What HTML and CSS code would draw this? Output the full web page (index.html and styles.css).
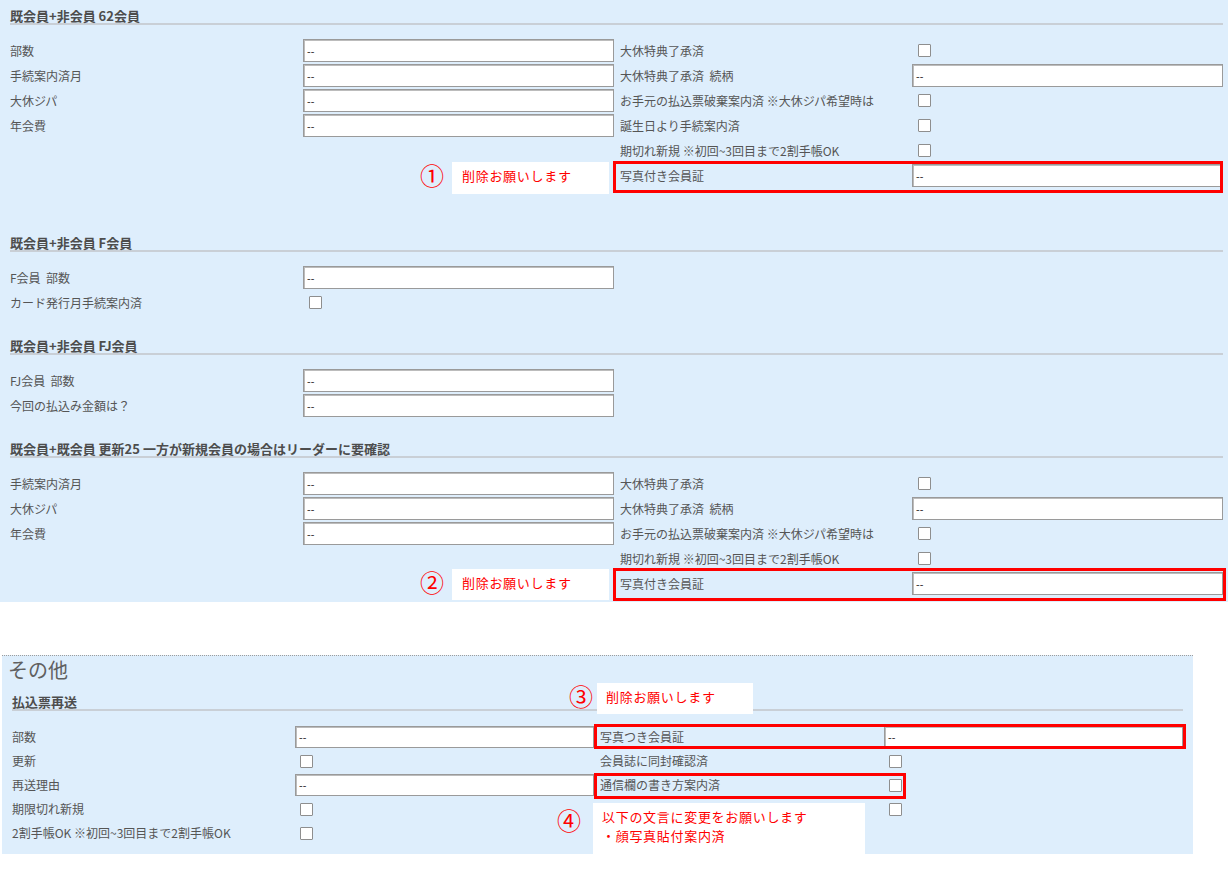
FILE: index.html
```html
<!DOCTYPE html>
<html lang="ja">
<head>
    <meta charset="UTF-8">
    <meta name="viewport" content="width=device-width, initial-scale=1.0">
    <title>会員手続き</title>
    <link rel="stylesheet" href="styles.css">
</head>
<body>
    <div class="top-panel">
        <!-- 62会員 -->
        <div class="section spaced">
            <div class="section-title">既会員+非会員 62会員</div>
            <div class="rows">
                <div class="row">
                    <div class="half left"><div class="label">部数</div><div class="field"><input type="text" class="text-input" value="--" readonly></div></div>
                    <div class="half right"><div class="label">大休特典了承済</div><div class="field"><input type="checkbox" class="check"></div></div>
                </div>
                <div class="row">
                    <div class="half left"><div class="label">手続案内済月</div><div class="field"><input type="text" class="text-input" value="--" readonly></div></div>
                    <div class="half right"><div class="label">大休特典了承済&nbsp;&nbsp;続柄</div><div class="field"><input type="text" class="text-input" value="--" readonly></div></div>
                </div>
                <div class="row">
                    <div class="half left"><div class="label">大休ジパ</div><div class="field"><input type="text" class="text-input" value="--" readonly></div></div>
                    <div class="half right"><div class="label">お手元の払込票破棄案内済 ※大休ジパ希望時は</div><div class="field"><input type="checkbox" class="check"></div></div>
                </div>
                <div class="row">
                    <div class="half left"><div class="label">年会費</div><div class="field"><input type="text" class="text-input" value="--" readonly></div></div>
                    <div class="half right"><div class="label">誕生日より手続案内済</div><div class="field"><input type="checkbox" class="check"></div></div>
                </div>
                <div class="row">
                    <div class="half left"><div class="label"></div><div class="field"></div></div>
                    <div class="half right"><div class="label">期切れ新規 ※初回~3回目まで2割手帳OK</div><div class="field"><input type="checkbox" class="check"></div></div>
                </div>
                <div class="row">
                    <div class="half left">
                        <div class="label"></div><div class="field"></div>
                        <div class="note-box note-1"><span class="note-num">①</span>削除お願いします</div>
                    </div>
                    <div class="half right">
                        <div class="label">写真付き会員証</div><div class="field"><input type="text" class="text-input" value="--" readonly></div>
                        <div class="mark mark-wide"></div>
                    </div>
                </div>
            </div>
        </div>

        <!-- F会員 -->
        <div class="section">
            <div class="section-title">既会員+非会員 F会員</div>
            <div class="rows">
                <div class="row">
                    <div class="half left"><div class="label">F会員&nbsp;&nbsp;部数</div><div class="field"><input type="text" class="text-input" value="--" readonly></div></div>
                </div>
                <div class="row">
                    <div class="half left"><div class="label">カード発行月手続案内済</div><div class="field"><input type="checkbox" class="check"></div></div>
                </div>
            </div>
        </div>

        <!-- FJ会員 -->
        <div class="section">
            <div class="section-title">既会員+非会員 FJ会員</div>
            <div class="rows">
                <div class="row">
                    <div class="half left"><div class="label">FJ会員&nbsp;&nbsp;部数</div><div class="field"><input type="text" class="text-input" value="--" readonly></div></div>
                </div>
                <div class="row">
                    <div class="half left"><div class="label">今回の払込み金額は？</div><div class="field"><input type="text" class="text-input" value="--" readonly></div></div>
                </div>
            </div>
        </div>

        <!-- 更新25 -->
        <div class="section">
            <div class="section-title">既会員+既会員 更新25 一方が新規会員の場合はリーダーに要確認</div>
            <div class="rows">
                <div class="row">
                    <div class="half left"><div class="label">手続案内済月</div><div class="field"><input type="text" class="text-input" value="--" readonly></div></div>
                    <div class="half right"><div class="label">大休特典了承済</div><div class="field"><input type="checkbox" class="check"></div></div>
                </div>
                <div class="row">
                    <div class="half left"><div class="label">大休ジパ</div><div class="field"><input type="text" class="text-input" value="--" readonly></div></div>
                    <div class="half right"><div class="label">大休特典了承済&nbsp;&nbsp;続柄</div><div class="field"><input type="text" class="text-input" value="--" readonly></div></div>
                </div>
                <div class="row">
                    <div class="half left"><div class="label">年会費</div><div class="field"><input type="text" class="text-input" value="--" readonly></div></div>
                    <div class="half right"><div class="label">お手元の払込票破棄案内済 ※大休ジパ希望時は</div><div class="field"><input type="checkbox" class="check"></div></div>
                </div>
                <div class="row">
                    <div class="half left"><div class="label"></div><div class="field"></div></div>
                    <div class="half right"><div class="label">期切れ新規 ※初回~3回目まで2割手帳OK</div><div class="field"><input type="checkbox" class="check"></div></div>
                </div>
                <div class="row">
                    <div class="half left">
                        <div class="label"></div><div class="field"></div>
                        <div class="note-box note-2"><span class="note-num">②</span>削除お願いします</div>
                    </div>
                    <div class="half right">
                        <div class="label">写真付き会員証</div><div class="field"><input type="text" class="text-input" value="--" readonly></div>
                        <div class="mark mark-wide mark-2"></div>
                    </div>
                </div>
            </div>
        </div>
    </div>

    <div class="bottom-panel">
        <div class="panel-title">その他</div>
        <div class="section">
            <div class="section-title">
                払込票再送
                <div class="note-box note-3"><span class="note-num">③</span>削除お願いします</div>
            </div>
            <div class="rows">
                <div class="row">
                    <div class="half left"><div class="label">部数</div><div class="field"><input type="text" class="text-input" value="--" readonly></div></div>
                    <div class="half right">
                        <div class="label">写真つき会員証</div><div class="field"><input type="text" class="text-input" value="--" readonly></div>
                        <div class="mark mark-3"></div>
                    </div>
                </div>
                <div class="row">
                    <div class="half left"><div class="label">更新</div><div class="field"><input type="checkbox" class="check"></div></div>
                    <div class="half right"><div class="label">会員誌に同封確認済</div><div class="field"><input type="checkbox" class="check"></div></div>
                </div>
                <div class="row">
                    <div class="half left"><div class="label">再送理由</div><div class="field"><input type="text" class="text-input" value="--" readonly></div></div>
                    <div class="half right">
                        <div class="label">通信欄の書き方案内済</div><div class="field"><input type="checkbox" class="check"></div>
                        <div class="mark mark-4"></div>
                    </div>
                </div>
                <div class="row">
                    <div class="half left"><div class="label">期限切れ新規</div><div class="field"><input type="checkbox" class="check"></div></div>
                    <div class="half right">
                        <div class="label"></div><div class="field"><input type="checkbox" class="check"></div>
                        <div class="note-box note-4"><span class="note-num">④</span>以下の文言に変更をお願いします<br>・顔写真貼付案内済</div>
                    </div>
                </div>
                <div class="row">
                    <div class="half left"><div class="label">2割手帳OK ※初回~3回目まで2割手帳OK</div><div class="field"><input type="checkbox" class="check"></div></div>
                </div>
            </div>
        </div>
    </div>
</body>
</html>
```

FILE: styles.css
```css
* {
    margin: 0;
    padding: 0;
    box-sizing: border-box;
}

body {
    background: #fff;
    font-family: "Noto Sans CJK JP", "Noto Sans", sans-serif;
    font-size: 12px;
    color: #555;
}

.top-panel {
    width: 1228px;
    background: #deeefc;
    padding: 9px 5px 6px 10px;
}

.section {
    margin-bottom: 24px;
}

.section:last-child {
    margin-bottom: 0;
}

.section.spaced {
    margin-bottom: 48px;
}

.section-title {
    position: relative;
    font-size: 13px;
    font-weight: bold;
    line-height: 14px;
    color: #4d4d4d;
    border-bottom: 2px solid #c9cfd6;
}

.rows {
    margin-top: 13px;
}

.row {
    display: flex;
    height: 25px;
}

.half {
    position: relative;
    display: flex;
    align-items: center;
    height: 100%;
}

.label {
    white-space: nowrap;
    overflow: hidden;
    line-height: 16px;
}

.field {
    display: flex;
    align-items: center;
}

.top-panel .left .label {
    width: 293px;
}

.top-panel .right .label {
    width: 298px;
    padding: 0 20px 0 6px;
}

.top-panel .field {
    width: 311px;
}

.text-input {
    width: 100%;
    height: 23px;
    border: 1px solid #9a9a9a;
    box-shadow: inset 1px 1px 0 #bcbcbc;
    background: #fff;
    padding: 0 3px;
    font-family: "Liberation Sans", Arial, sans-serif;
    font-size: 11px;
    color: #333;
    outline: none;
}

.check {
    appearance: none;
    -webkit-appearance: none;
    width: 13px;
    height: 13px;
    margin-left: 6px;
    border: 1px solid #8e8e8e;
    border-radius: 1px;
    background: #fff;
}

/* bottom panel */
.bottom-panel {
    width: 1191px;
    margin: 53px 0 0 2px;
    background: #deeefc;
    border-top: 1px dotted #9d9d9d;
    padding: 2px 10px 9px 10px;
}

.panel-title {
    margin-left: -4px;
    font-size: 20px;
    line-height: 24px;
    color: #606060;
    margin-bottom: 13px;
}

.bottom-panel .rows {
    margin-top: 14px;
}

.bottom-panel .row {
    height: 24px;
}

.bottom-panel .text-input {
    height: 22px;
}

.bottom-panel .left .label {
    width: 283px;
}

.bottom-panel .right .label {
    width: 290px;
    padding-left: 6px;
}

.bottom-panel .field {
    width: 299px;
}

.bottom-panel .check {
    margin-left: 5px;
}

/* annotations */
.mark {
    position: absolute;
    border: 3px solid #f00;
    z-index: 2;
}

.mark-wide {
    left: -1px;
    right: 0;
    top: -2px;
    bottom: -5px;
}

.mark-2 {
    top: -3px;
    right: -3px;
}

.mark-3 {
    left: 0;
    right: -3px;
    top: -1px;
    bottom: 0;
}

.mark-4 {
    left: 0;
    top: 0;
    bottom: -2px;
    width: 312px;
}

.note-box {
    position: absolute;
    z-index: 3;
    background: #fff;
    color: #f00;
    font-family: "Noto Sans CJK JP", sans-serif;
    font-weight: normal;
    font-size: 13px;
    letter-spacing: 0.7px;
    line-height: 19px;
    white-space: nowrap;
}

.note-num {
    position: absolute;
    top: 0;
    right: calc(100% + 8px);
    font-size: 24px;
    line-height: 26px;
    letter-spacing: 0;
    color: #f00;
}

.note-1,
.note-2 {
    right: 5px;
    top: -1px;
    width: 157px;
    height: 32px;
    padding: 4px 0 0 10px;
}

.note-2 {
    top: -2px;
    height: 31px;
}

.note-3 {
    left: 585px;
    top: -12px;
    width: 156px;
    height: 31px;
    padding: 4px 0 0 9px;
}

.note-3 .note-num {
    right: calc(100% + 4px);
}

.note-4 {
    left: -1px;
    top: 6px;
    width: 272px;
    height: 52px;
    padding: 4px 0 0 9px;
}

.note-4 .note-num {
    top: 4px;
    right: calc(100% + 12px);
}
```
